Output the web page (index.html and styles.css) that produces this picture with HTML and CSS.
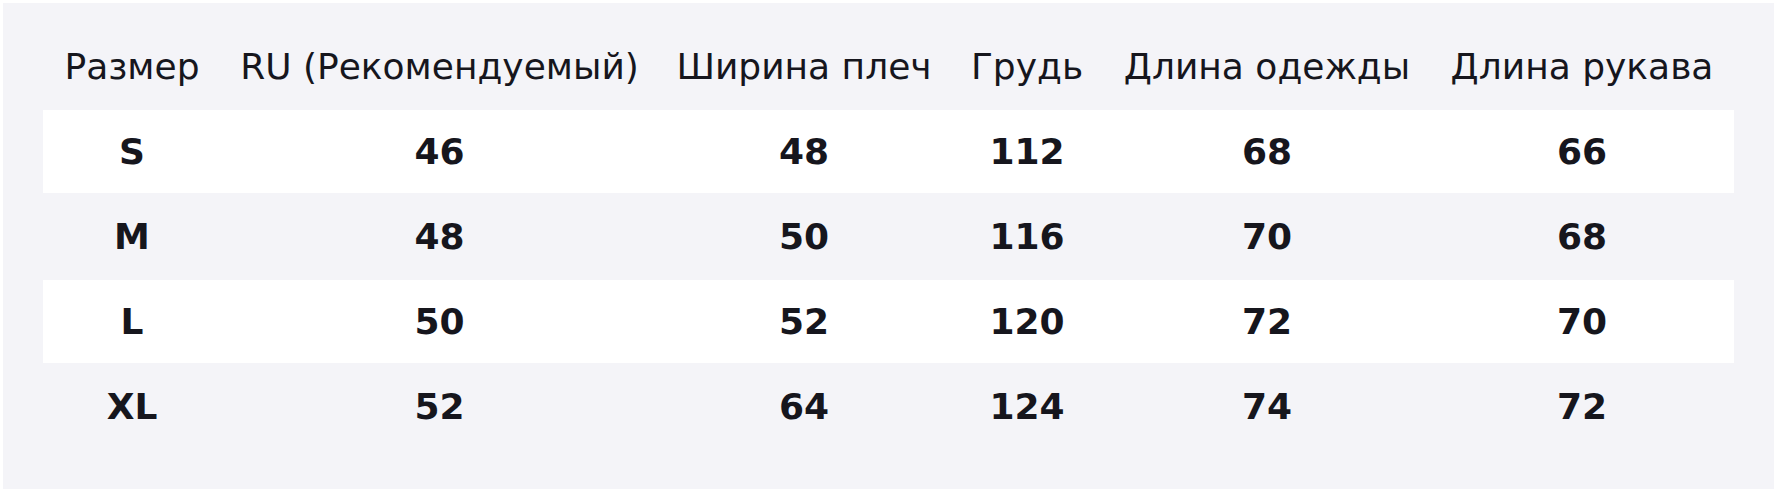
FILE: index.html
```html
<!DOCTYPE html>
<html lang="ru">
<head>
<meta charset="utf-8">
<link rel="stylesheet" href="styles.css">
</head>
<body>
<div class="panel">
  <table class="sizes">
    <colgroup>
      <col class="c1"><col class="c2"><col class="c3"><col class="c4"><col class="c5"><col class="c6">
    </colgroup>
    <thead>
      <tr><th>Размер</th><th>RU (Рекомендуемый)</th><th>Ширина плеч</th><th>Грудь</th><th>Длина одежды</th><th>Длина рукава</th></tr>
    </thead>
    <tbody>
      <tr class="odd"><td>S</td><td>46</td><td>48</td><td>112</td><td>68</td><td>66</td></tr>
      <tr><td>M</td><td>48</td><td>50</td><td>116</td><td>70</td><td>68</td></tr>
      <tr class="odd"><td>L</td><td>50</td><td>52</td><td>120</td><td>72</td><td>70</td></tr>
      <tr><td>XL</td><td>52</td><td>64</td><td>124</td><td>74</td><td>72</td></tr>
    </tbody>
  </table>
</div>
</body>
</html>
```
FILE: styles.css
```css
html, body {
  margin: 0;
  padding: 0;
  background: #ffffff;
}
body {
  padding: 3px;
  font-family: "DejaVu Sans", "Noto Sans", sans-serif;
  color: #16161d;
}
.panel {
  background: #f4f4f8;
  height: 486px;
  box-sizing: border-box;
  padding: 20px 40px 39px 40px;
}
.sizes {
  width: 100%;
  table-layout: fixed;
  border-collapse: separate;
  border-spacing: 0 2px;
  font-size: 36px;
}
.c1 { width: 178px; }
.c2 { width: 437px; }
.c3 { width: 292px; }
.c4 { width: 154px; }
.c5 { width: 326px; }
.c6 { width: 304px; }
.sizes th,
.sizes td {
  height: 83px;
  padding: 0;
  text-align: center;
  vertical-align: middle;
  white-space: nowrap;
  line-height: 1;
}
.sizes th {
  font-weight: normal;
}
.sizes td {
  font-weight: bold;
}
.sizes tr.odd td {
  background: #ffffff;
}
```
